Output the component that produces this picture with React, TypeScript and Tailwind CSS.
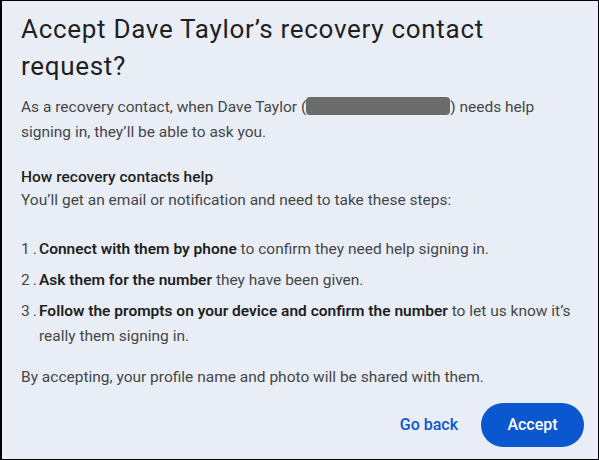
export default function App() {
  return (
    <div
      className="h-[460px] w-[599px] overflow-hidden bg-[#e9eef6] border border-black border-l-2 text-[#444746]"
      style={{ fontFamily: "Roboto, 'Open Sans', sans-serif" }}
    >
      <div className="px-[19px] pt-[10px]">
        <h1 className="text-[26px] leading-[37px] tracking-[0.7px] text-[#1f1f1f]">
          Accept Dave Taylor’s recovery contact request?
        </h1>

        <p className="mt-[9px] text-[15.5px] leading-[25px]">
          As a recovery contact, when Dave Taylor (
          <span className="inline-block h-[18px] w-[144px] translate-y-[3px] rounded-[4px] bg-[#6b6b6b] align-baseline" />
          ) needs help signing in, they’ll be able to ask you.
        </p>

        <div className="mt-[21px] text-[15.5px] leading-[23px]">
          <div className="font-medium text-[#1f1f1f]">How recovery contacts help</div>
          <div>You’ll get an email or notification and need to take these steps:</div>
        </div>

        <ol className="mt-[25px] flex flex-col gap-[6px] text-[15.5px] leading-[25px]">
          <li className="flex">
            <span className="w-[18px] shrink-0">1<span className="ml-[3px]">.</span></span>
            <span>
              <b className="font-semibold text-[#1f1f1f]">Connect with them by phone</b> to confirm they need help signing in.
            </span>
          </li>
          <li className="flex">
            <span className="w-[18px] shrink-0">2<span className="ml-[3px]">.</span></span>
            <span>
              <b className="font-semibold text-[#1f1f1f]">Ask them for the number</b> they have been given.
            </span>
          </li>
          <li className="flex">
            <span className="w-[18px] shrink-0">3<span className="ml-[3px]">.</span></span>
            <span>
              <b className="font-semibold text-[#1f1f1f]">Follow the prompts on your device and confirm the number</b> to let us know it’s really them signing in.
            </span>
          </li>
        </ol>

        <p className="mt-[16px] text-[15.5px] leading-[25px]">
          By accepting, your profile name and photo will be shared with them.
        </p>

        <div className="-mr-[5px] mt-[13px] flex items-center justify-end gap-[7px]">
          <button className="h-[44px] px-[16px] text-[16px] font-medium text-[#0b57d0]">Go back</button>
          <button className="h-[44px] w-[103px] rounded-full bg-[#0b57d0] text-[16px] font-medium text-white">
            Accept
          </button>
        </div>
      </div>
    </div>
  );
}
